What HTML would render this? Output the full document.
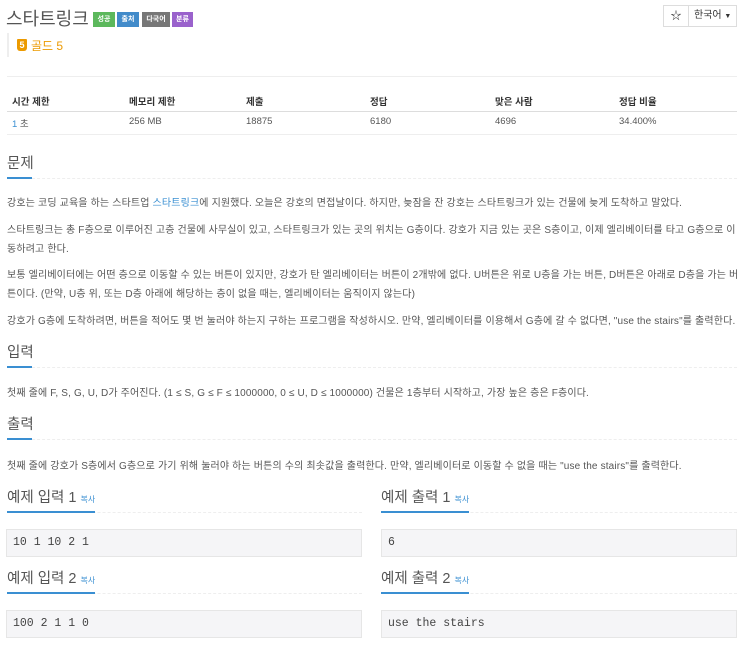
<!DOCTYPE html>
<html><head><meta charset="utf-8"><style>
*{margin:0;padding:0;box-sizing:border-box}
body{width:743px;height:646px;background:#fff;position:relative;overflow:hidden;font-family:"Liberation Sans","Noto Sans CJK KR",sans-serif;color:#555;font-size:11px}
.a{position:absolute;white-space:nowrap}
.lb{position:absolute;top:12px;height:15px;font-size:7px;color:#fff;line-height:15px;text-align:center;font-weight:bold}
.th{position:absolute;top:94px;font-weight:bold;font-size:9.5px;color:#333}
.td{position:absolute;top:116px;font-size:9.5px;color:#555}
.h{position:absolute;font-size:14.5px;color:#555;white-space:nowrap}
.ul{position:absolute;height:2px;background:#3a8fd2}
.dl{position:absolute;height:1px;border-top:1px dashed #eee}
.p{position:absolute;left:7px;font-size:10px;white-space:nowrap;color:#555;letter-spacing:0.15px}
.box{position:absolute;height:28px;background:#f5f5f7;border:1px solid #e6e6e6;font-family:"Liberation Mono",monospace;font-size:11.5px;color:#444;padding:6px 0 0 6px}
.cp{font-size:8px;color:#3a8fd2;margin-left:4px}
</style></head><body>
<div class="a" style="left:6px;top:5px;font-size:18px;color:#555">스타트링크</div>
<div class="lb" style="left:93px;width:22px;background:#5cb85c">성공</div>
<div class="lb" style="left:117px;width:22px;background:#428bca">출처</div>
<div class="lb" style="left:142px;width:28px;background:#777">다국어</div>
<div class="lb" style="left:172px;width:21px;background:#9a62cc">분류</div>
<div class="a" style="left:663px;top:5px;width:26px;height:22px;border:1px solid #ddd;text-align:center;line-height:20px;font-size:11px;color:#333">☆</div>
<div class="a" style="left:688px;top:5px;width:49px;height:22px;border:1px solid #ddd;line-height:20px;font-size:10px;color:#333;padding-left:5px">한국어 <span style="font-size:7px">▼</span></div>
<div class="a" style="left:7px;top:33px;width:2px;height:24px;background:#eee"></div>
<div class="a" style="left:17px;top:39px;width:10px;height:12px;background:#ec9a00;color:#fff;font-size:9px;font-weight:bold;text-align:center;line-height:12px;border-radius:1px 1px 3px 3px">5</div>
<div class="a" style="left:31px;top:37px;font-size:12px;color:#ec9a00">골드 5</div>
<div class="a" style="left:7px;top:76px;width:730px;height:1px;background:#eee"></div>
<div class="th" style="left:12px">시간 제한</div><div class="th" style="left:129px">메모리 제한</div><div class="th" style="left:246px">제출</div><div class="th" style="left:370px">정답</div><div class="th" style="left:495px">맞은 사람</div><div class="th" style="left:619px">정답 비율</div>
<div class="a" style="left:7px;top:111px;width:730px;height:1px;background:#ddd"></div>
<div class="td" style="left:12px"><span style="color:#3a8fd2">1</span> 초</div><div class="td" style="left:129px">256 MB</div><div class="td" style="left:246px">18875</div><div class="td" style="left:370px">6180</div><div class="td" style="left:495px">4696</div><div class="td" style="left:619px">34.400%</div>
<div class="a" style="left:7px;top:134px;width:730px;height:1px;background:#eee"></div>

<div class="h" style="left:7px;top:152px">문제</div>
<div class="dl" style="left:7px;top:178px;width:730px"></div><div class="ul" style="left:7px;top:177px;width:25px"></div>
<div class="p" style="top:194px">강호는 코딩 교육을 하는 스타트업 <span style="color:#3a8fd2">스타트링크</span>에 지원했다. 오늘은 강호의 면접날이다. 하지만, 늦잠을 잔 강호는 스타트링크가 있는 건물에 늦게 도착하고 말았다.</div>
<div class="p" style="top:221px">스타트링크는 총 F층으로 이루어진 고층 건물에 사무실이 있고, 스타트링크가 있는 곳의 위치는 G층이다. 강호가 지금 있는 곳은 S층이고, 이제 엘리베이터를 타고 G층으로 이</div>
<div class="p" style="top:240px">동하려고 한다.</div>
<div class="p" style="top:266px">보통 엘리베이터에는 어떤 층으로 이동할 수 있는 버튼이 있지만, 강호가 탄 엘리베이터는 버튼이 2개밖에 없다. U버튼은 위로 U층을 가는 버튼, D버튼은 아래로 D층을 가는 버</div>
<div class="p" style="top:285px">튼이다. (만약, U층 위, 또는 D층 아래에 해당하는 층이 없을 때는, 엘리베이터는 움직이지 않는다)</div>
<div class="p" style="top:312px">강호가 G층에 도착하려면, 버튼을 적어도 몇 번 눌러야 하는지 구하는 프로그램을 작성하시오. 만약, 엘리베이터를 이용해서 G층에 갈 수 없다면, "use the stairs"를 출력한다.</div>

<div class="h" style="left:7px;top:341px">입력</div>
<div class="dl" style="left:7px;top:367px;width:730px"></div><div class="ul" style="left:7px;top:366px;width:25px"></div>
<div class="p" style="top:384px">첫째 줄에 F, S, G, U, D가 주어진다. (1 ≤ S, G ≤ F ≤ 1000000, 0 ≤ U, D ≤ 1000000) 건물은 1층부터 시작하고, 가장 높은 층은 F층이다.</div>

<div class="h" style="left:7px;top:413px">출력</div>
<div class="dl" style="left:7px;top:439px;width:730px"></div><div class="ul" style="left:7px;top:438px;width:25px"></div>
<div class="p" style="top:457px">첫째 줄에 강호가 S층에서 G층으로 가기 위해 눌러야 하는 버튼의 수의 최솟값을 출력한다. 만약, 엘리베이터로 이동할 수 없을 때는 "use the stairs"를 출력한다.</div>

<div class="h" style="left:7px;top:486px">예제 입력 1<span class="cp">복사</span></div>
<div class="dl" style="left:7px;top:512px;width:355px"></div><div class="ul" style="left:7px;top:511px;width:88px"></div>
<div class="box" style="left:6px;top:529px;width:356px">10 1 10 2 1</div>
<div class="h" style="left:381px;top:486px">예제 출력 1<span class="cp">복사</span></div>
<div class="dl" style="left:381px;top:512px;width:356px"></div><div class="ul" style="left:381px;top:511px;width:88px"></div>
<div class="box" style="left:381px;top:529px;width:356px">6</div>

<div class="h" style="left:7px;top:567px">예제 입력 2<span class="cp">복사</span></div>
<div class="dl" style="left:7px;top:593px;width:355px"></div><div class="ul" style="left:7px;top:592px;width:88px"></div>
<div class="box" style="left:6px;top:610px;width:356px">100 2 1 1 0</div>
<div class="h" style="left:381px;top:567px">예제 출력 2<span class="cp">복사</span></div>
<div class="dl" style="left:381px;top:593px;width:356px"></div><div class="ul" style="left:381px;top:592px;width:88px"></div>
<div class="box" style="left:381px;top:610px;width:356px">use the stairs</div>
</body></html>
